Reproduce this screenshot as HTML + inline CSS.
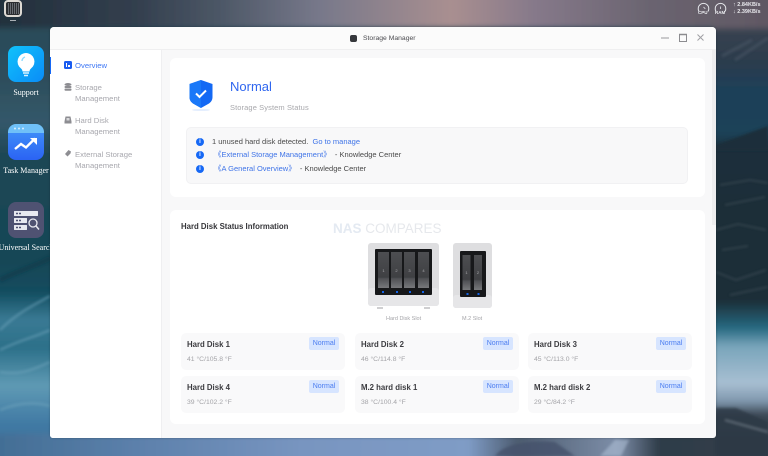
<!DOCTYPE html>
<html><head><meta charset="utf-8"><style>
*{box-sizing:border-box}
html,body{margin:0;padding:0}
body{width:768px;height:456px;overflow:hidden;position:relative;font-family:"Liberation Sans",sans-serif;background:#24495c}
#w{position:absolute;left:0;top:0;width:768px;height:456px;filter:blur(.3px)}
.a{position:absolute}
.t{position:absolute;white-space:nowrap}
.lbl{position:absolute;width:60px;text-align:center;color:#fff;font:8px/10px "Liberation Serif",serif;white-space:nowrap}
.nav{position:absolute;left:75px;font-size:7.7px;line-height:11px;color:#a8a8ae}
.i{position:absolute;left:196px;width:8px;height:8px;border-radius:50%;background:#1668f5;color:#fff;font:bold 6px/8px "Liberation Sans",sans-serif;text-align:center}
.r{position:absolute;font-size:7.5px;line-height:10px;color:#4a4a4a;white-space:nowrap}
.r b{font-weight:400;color:#3f74e8}
.d{position:absolute;width:164px;height:37px;background:#f9f9fa;border-radius:5px}
.d .n{position:absolute;left:6px;top:6px;font-size:7.8px;font-weight:bold;line-height:11px;color:#3c3c40;white-space:nowrap}
.d .s{position:absolute;left:6px;top:22px;font-size:6.8px;line-height:9px;color:#a4a4a8;white-space:nowrap}
.d .p{position:absolute;right:6px;top:4px;width:30px;height:13px;background:#d7e5ff;border-radius:2px;color:#4b7df0;font-size:7px;line-height:13px;text-align:center}
</style></head><body><div id="w">
<svg class="a" style="left:0;top:0" width="768" height="456" viewBox="0 0 768 456">
<defs>
<linearGradient id="top" x1="0" y1="0" x2="1" y2="0">
<stop offset="0" stop-color="#1e2c38"/><stop offset=".2" stop-color="#333f4e"/><stop offset=".3" stop-color="#4c5766"/><stop offset=".42" stop-color="#77788a"/><stop offset=".58" stop-color="#a98f90"/><stop offset=".68" stop-color="#86798a"/><stop offset=".82" stop-color="#6a6470"/><stop offset="1" stop-color="#5e5560"/>
</linearGradient>
<linearGradient id="bot" x1="0" y1="0" x2="1" y2="0">
<stop offset="0" stop-color="#3d6a90"/><stop offset=".2" stop-color="#5c80ab"/><stop offset=".4" stop-color="#7895c0"/><stop offset=".6" stop-color="#7f9cc6"/><stop offset=".66" stop-color="#4d5c70"/><stop offset=".78" stop-color="#7d8ea8"/><stop offset=".83" stop-color="#2f3c49"/><stop offset="1" stop-color="#313e4a"/>
</linearGradient>
<linearGradient id="left" x1="0" y1="0" x2="0" y2="1">
<stop offset="0" stop-color="#2b4958"/><stop offset=".17" stop-color="#2d4e5c"/><stop offset=".26" stop-color="#34586a"/><stop offset=".33" stop-color="#1e4654"/><stop offset=".55" stop-color="#154656"/><stop offset=".62" stop-color="#114c5e"/><stop offset=".68" stop-color="#3a7a94"/><stop offset=".74" stop-color="#2c7089"/><stop offset=".82" stop-color="#5f9ab4"/><stop offset=".9" stop-color="#417aa4"/><stop offset="1" stop-color="#3d6a94"/>
</linearGradient>
<linearGradient id="right" x1="0" y1="0" x2="0" y2="1">
<stop offset="0" stop-color="#5e5560"/><stop offset=".05" stop-color="#5a5460"/><stop offset=".07" stop-color="#37424f"/><stop offset=".14" stop-color="#2b3c4e"/><stop offset=".2" stop-color="#1d4059"/><stop offset=".29" stop-color="#1c4259"/><stop offset=".33" stop-color="#1a2f3a"/><stop offset=".66" stop-color="#1c2e38"/><stop offset=".72" stop-color="#276a82"/><stop offset=".76" stop-color="#79a5bb"/><stop offset=".84" stop-color="#a8bfd2"/><stop offset=".88" stop-color="#7f97ad"/><stop offset=".91" stop-color="#3a4652"/><stop offset="1" stop-color="#343f4a"/>
</linearGradient>
<filter id="b" filterUnits="userSpaceOnUse" x="-60" y="-60" width="900" height="580"><feGaussianBlur stdDeviation="3"/></filter>
<filter id="s" filterUnits="userSpaceOnUse" x="-60" y="-60" width="900" height="580"><feGaussianBlur stdDeviation="1.300"/></filter>
</defs>
<rect width="768" height="456" fill="#24495c"/>
<g filter="url(#b)">
<rect x="-30" y="0" width="90" height="470" fill="url(#left)"/>
<rect x="712" y="0" width="80" height="456" fill="url(#right)"/>
<rect x="-30" y="-20" width="830" height="48" fill="url(#top)"/>
<rect x="-30" y="434" width="830" height="40" fill="url(#bot)"/>
</g>
<g filter="url(#s)">
<path d="M716 145L768 126V150H716z" fill="#1a2f3a"/>
<path d="M720 185l30-5 18 3M725 205l40-8M716 230l22-6 28 6M722 250l26-4" stroke="#48555e" stroke-width="1.500" fill="none" opacity=".6"/>
<path d="M716 272l20 8 30-10M730 295l38-8" stroke="#3e4c56" stroke-width="2" fill="none" opacity=".6"/>
<path d="M735 60l33-22M722 56l30-16" stroke="#4a5665" stroke-width="3" fill="none" opacity=".6"/>
<path d="M0 330c18-18 36-26 50-34M0 350c20-10 38-14 50-20M0 372c22 4 36-4 50-10M0 410c20-8 36-8 50-4" stroke="#6fa5bd" stroke-width="2.500" fill="none" opacity=".5"/>
<path d="M0 280c20-10 36-14 50-22" stroke="#0c3c4c" stroke-width="5" fill="none" opacity=".7"/>
<path d="M716 408l20 0 32 14v34h-52z" fill="#2d3843" opacity=".8"/>
<path d="M725 420l43 12" stroke="#6a7683" stroke-width="2" fill="none" opacity=".7"/>
<path d="M495 456c10-14 40-16 60-14l20 14z" fill="#46526a" opacity=".8"/>
<path d="M600 456l15-16h14l-8 16z" fill="#b6c6db" opacity=".5"/>
</g>
</svg>

<!-- top-left app -->
<div class="a" style="left:4px;top:0;width:18px;height:17px;border:2px solid #ddd9d3;border-radius:4px;background:#2b2d30"></div>
<div class="a" style="left:7.500px;top:3px;width:11px;height:11px;background:repeating-linear-gradient(90deg,#686c72 0 1px,#2b2d30 1px 2px)"></div>
<div class="a" style="left:10px;top:20px;width:6px;height:1px;background:#a9b0b5"></div>

<!-- Support -->
<div class="a" style="left:8px;top:46px;width:36px;height:36px;border-radius:8px;background:linear-gradient(135deg,#10c2fb,#0a8cf7)"></div>
<svg class="a" style="left:8px;top:46px" width="36" height="36" viewBox="0 0 36 36"><path d="M18 7a8.600 8.600 0 0 0-5 15.500c.9.8 1.400 1.700 1.500 3h7c.1-1.300.6-2.200 1.500-3A8.600 8.600 0 0 0 18 7z" fill="#fff"/><path d="M15 27h6M16 29.500h4" stroke="#d9f3ff" stroke-width="1.600"/><path d="M14 15a4.600 4.600 0 0 1 3-4" stroke="#8fdcff" stroke-width="1.400" fill="none"/></svg>
<div class="lbl" style="left:-4px;top:88px">Support</div>

<!-- Task Manager -->
<div class="a" style="left:8px;top:124px;width:36px;height:36px;border-radius:8px;background:linear-gradient(180deg,#6fc0f8 0 25%,#3d8af8 25%,#2b63f3 100%)"></div>
<svg class="a" style="left:8px;top:124px" width="36" height="36" viewBox="0 0 36 36"><circle cx="7" cy="4.500" r="1" fill="#d8eeff"/><circle cx="11" cy="4.500" r="1" fill="#d8eeff"/><circle cx="15" cy="4.500" r="1" fill="#d8eeff"/><path d="M7 25l6-5 5 3.500 9-9" stroke="#fff" stroke-width="2.400" fill="none"/><path d="M22 14h7v7z" fill="#fff"/></svg>
<div class="lbl" style="left:-4px;top:166px">Task Manager</div>

<!-- Universal Search -->
<div class="a" style="left:8px;top:202px;width:36px;height:36px;border-radius:8px;background:#4f5272"></div>
<svg class="a" style="left:8px;top:202px" width="36" height="36" viewBox="0 0 36 36"><rect x="6" y="9" width="24" height="5" rx=".5" fill="#e8e9f0"/><rect x="6" y="16" width="13" height="5" rx=".5" fill="#e8e9f0"/><rect x="6" y="23" width="13" height="5" rx=".5" fill="#e8e9f0"/><path d="M8 11.500h2M11 11.500h2M8 18.500h2M11 18.500h2M8 25.500h2M11 25.500h2" stroke="#4f5272" stroke-width="1.400"/><circle cx="25" cy="21" r="4" fill="none" stroke="#e8e9f0" stroke-width="1.300"/><path d="M28 24l3 3.500" stroke="#e8e9f0" stroke-width="1.500"/></svg>
<div class="lbl" style="left:-4px;top:243px">Universal Search</div>

<!-- tray -->
<svg class="a" style="left:696px;top:2px" width="34" height="14" viewBox="0 0 34 14"><path d="M3 9.500a5.300 5.300 0 1 1 9 0" stroke="#e6e8ec" stroke-width="1" fill="none"/><path d="M7.500 5l1.800 1.800" stroke="#e6e8ec" stroke-width=".8"/><path d="M20 9.500a5.300 5.300 0 1 1 9 0" stroke="#e6e8ec" stroke-width="1" fill="none"/><path d="M24.500 4.500v2.500" stroke="#e6e8ec" stroke-width=".8"/></svg>
<div class="t" style="left:698px;top:10px;font-size:4.500px;line-height:5px;color:#eef0f3;font-weight:bold">CPU</div>
<div class="t" style="left:715px;top:10px;font-size:4.500px;line-height:5px;color:#eef0f3;font-weight:bold">RAM</div>
<div class="t" style="left:733px;top:2px;font-size:5.500px;line-height:7px;color:#e8e8ec;font-weight:bold">↑ 2.84KB/s<br>↓ 2.39KB/s</div>

<!-- window -->
<div class="a" style="left:50px;top:27px;width:666px;height:411px;background:#f8f8f9;border-radius:4px 4px 3px 3px;overflow:hidden;box-shadow:0 0 2px rgba(0,0,0,.25)">
  <div class="a" style="left:0;top:0;width:666px;height:23px;background:#fbfbfb;border-bottom:1px solid #efeff0"></div>
  <div class="a" style="left:0;top:23px;width:112px;height:388px;background:#fff;border-right:1px solid #efeff1"></div>
  <div class="a" style="left:662px;top:23px;width:4px;height:175px;background:#eeeeef"></div>
  <div class="a" style="left:120px;top:31px;width:535px;height:139px;background:#fff;border-radius:6px"></div>
  <div class="a" style="left:120px;top:183px;width:535px;height:214px;background:#fff;border-radius:6px"></div>
</div>
<div class="a" style="left:350px;top:35px;width:7px;height:7px;border-radius:2px;background:#36383c"></div>
<div class="t" style="left:363px;top:34px;font-size:6.800px;line-height:10px;color:#4b4b50">Storage Manager</div>
<svg class="a" style="left:658px;top:31px" width="50" height="14" viewBox="0 0 50 14"><path d="M3 7h8" stroke="#9a9a9e" stroke-width="1"/><rect x="21.500" y="3.500" width="7" height="7" fill="none" stroke="#8c8c90" stroke-width="1"/><path d="M21 3.500h8" stroke="#8c8c90" stroke-width="1.500"/><path d="M39.500 3.500l6 6M45.500 3.500l-6 6" stroke="#a0a0a4" stroke-width="1"/></svg>

<!-- sidebar -->
<div class="a" style="left:50px;top:57px;width:1px;height:17px;background:#1668f5"></div>
<div class="a" style="left:64px;top:61px;width:8px;height:8px;border-radius:1.500px;background:#1a5cf0"></div>
<div class="a" style="left:66px;top:63px;width:1px;height:4px;background:#fff"></div>
<div class="a" style="left:68px;top:65px;width:2px;height:2px;background:#fff"></div>
<div class="nav" style="top:60px;color:#3f78f5">Overview</div>
<svg class="a" style="left:64px;top:83px" width="8" height="8" viewBox="0 0 8 8"><ellipse cx="4" cy="1.500" rx="3.500" ry="1.500" fill="#8d8d92"/><rect x=".5" y="3" width="7" height="2" rx="1" fill="#8d8d92"/><rect x=".5" y="5.500" width="7" height="2.300" rx="1" fill="#8d8d92"/></svg>
<div class="nav" style="top:82px">Storage<br>Management</div>
<svg class="a" style="left:64px;top:116px" width="8" height="8" viewBox="0 0 8 8"><path d="M1.500.5h5l1 5v2h-7v-2z" fill="#8d8d92"/><rect x="2.500" y="2" width="3" height="2.500" fill="#d8d8da"/></svg>
<div class="nav" style="top:115px">Hard Disk<br>Management</div>
<svg class="a" style="left:64px;top:149px" width="8" height="8" viewBox="0 0 8 8"><path d="M1 5l3.500-4 2.500 1.500-.5 2-3 3z" fill="#8d8d92"/></svg>
<div class="nav" style="top:149px">External Storage<br>Management</div>

<!-- status -->
<svg class="a" style="left:187px;top:79px" width="28" height="34" viewBox="0 0 28 34"><path d="M14 1l11.500 4v13c0 3-1.500 5-3.500 6.500L14 29l-8-4.500C4 23 2.500 21 2.500 18V5z" fill="#1469f4"/><path d="M2.500 5L14 1v28l-8-4.500C4 23 2.500 21 2.500 18z" fill="#1a78f8"/><path d="M9 14.500l3.500 3.500 6.500-6.500" stroke="#fff" stroke-width="2" fill="none"/><ellipse cx="14" cy="31" rx="9" ry=".8" fill="#dbe8fd"/></svg>
<div class="t" style="left:230px;top:79px;font-size:13px;line-height:16px;color:#2f66ef">Normal</div>
<div class="t" style="left:230px;top:102px;font-size:7.500px;line-height:11px;color:#a8a8ac;letter-spacing:.1px">Storage System Status</div>

<div class="a" style="left:186px;top:127px;width:502px;height:57px;background:#f8f8f9;border:1px solid #f1f1f3;border-radius:5px"></div>
<div class="i" style="top:138px">i</div>
<div class="i" style="top:151px">i</div>
<div class="i" style="top:165px">i</div>
<div class="r" style="left:212px;top:137px">1 unused hard disk detected. <b>&nbsp;Go to manage</b></div>
<div class="r" style="left:214px;top:150px"><b>《External Storage Management》</b>&nbsp; - Knowledge Center</div>
<div class="r" style="left:214px;top:164px"><b>《A General Overview》</b>&nbsp; - Knowledge Center</div>

<!-- section 2 -->
<div class="t" style="left:181px;top:221px;font-size:7.800px;font-weight:bold;line-height:11px;color:#36363a">Hard Disk Status Information</div>
<div class="t" style="left:333px;top:220px;font-size:13.500px;line-height:18px;font-weight:bold;color:#e4eaf2">NAS <span style="font-weight:400;color:#e6e8ec">COMPARES</span></div>

<svg class="a" style="left:366px;top:240px" width="130" height="72" viewBox="0 0 130 72">
<defs><linearGradient id="bay" x1="0" y1="0" x2="0" y2="1"><stop offset="0" stop-color="#4d4e51"/><stop offset=".7" stop-color="#3f4043"/><stop offset=".74" stop-color="#505155"/><stop offset="1" stop-color="#77787b"/></linearGradient></defs>
<rect x="2" y="3" width="71" height="63" rx="3" fill="#dedee0"/><rect x="2" y="48" width="71" height="18" rx="3" fill="#e6e6e8"/>
<rect x="9" y="9" width="57" height="46" rx="1" fill="#17181a"/>
<g fill="url(#bay)"><rect x="12" y="12" width="11" height="36"/><rect x="25" y="12" width="11" height="36"/><rect x="38" y="12" width="11" height="36"/><rect x="52" y="12" width="11" height="36"/></g>
<g fill="#1463e6"><rect x="16" y="51" width="2" height="2"/><rect x="30" y="51" width="2" height="2"/><rect x="43" y="51" width="2" height="2"/><rect x="56" y="51" width="2" height="2"/></g>
<g fill="#aaaaad" font-family="Liberation Sans" font-size="4" text-anchor="middle"><text x="17.500" y="32">1</text><text x="30.500" y="32">2</text><text x="43.500" y="32">3</text><text x="57.500" y="32">4</text></g>
<rect x="11" y="67" width="6" height="2" fill="#cfcfd1"/><rect x="58" y="67" width="6" height="2" fill="#cfcfd1"/>
<rect x="87" y="3" width="39" height="65" rx="3" fill="#dedee0"/><rect x="87" y="55" width="39" height="13" rx="3" fill="#e6e6e8"/>
<rect x="94" y="11" width="26" height="46" rx="1" fill="#17181a"/>
<g fill="url(#bay)"><rect x="96.500" y="15" width="8" height="35"/><rect x="108" y="15" width="8" height="35"/></g>
<g fill="#1463e6"><rect x="100.500" y="53" width="2" height="2"/><rect x="111.500" y="53" width="2" height="2"/></g>
<g fill="#aaaaad" font-family="Liberation Sans" font-size="4" text-anchor="middle"><text x="100.500" y="34">1</text><text x="112" y="34">2</text></g>
</svg>
<div class="t" style="left:386px;top:315px;font-size:5.500px;line-height:8px;color:#a5a5a9">Hard Disk Slot</div>
<div class="t" style="left:462px;top:315px;font-size:5.500px;line-height:8px;color:#a5a5a9">M.2 Slot</div>

<div class="d" style="left:181px;top:333px"><div class="n">Hard Disk 1</div><div class="s">41 °C/105.8 °F</div><div class="p">Normal</div></div>
<div class="d" style="left:355px;top:333px"><div class="n">Hard Disk 2</div><div class="s">46 °C/114.8 °F</div><div class="p">Normal</div></div>
<div class="d" style="left:528px;top:333px"><div class="n">Hard Disk 3</div><div class="s">45 °C/113.0 °F</div><div class="p">Normal</div></div>
<div class="d" style="left:181px;top:376px"><div class="n">Hard Disk 4</div><div class="s">39 °C/102.2 °F</div><div class="p">Normal</div></div>
<div class="d" style="left:355px;top:376px"><div class="n">M.2 hard disk 1</div><div class="s">38 °C/100.4 °F</div><div class="p">Normal</div></div>
<div class="d" style="left:528px;top:376px"><div class="n">M.2 hard disk 2</div><div class="s">29 °C/84.2 °F</div><div class="p">Normal</div></div>
</div></body></html>
